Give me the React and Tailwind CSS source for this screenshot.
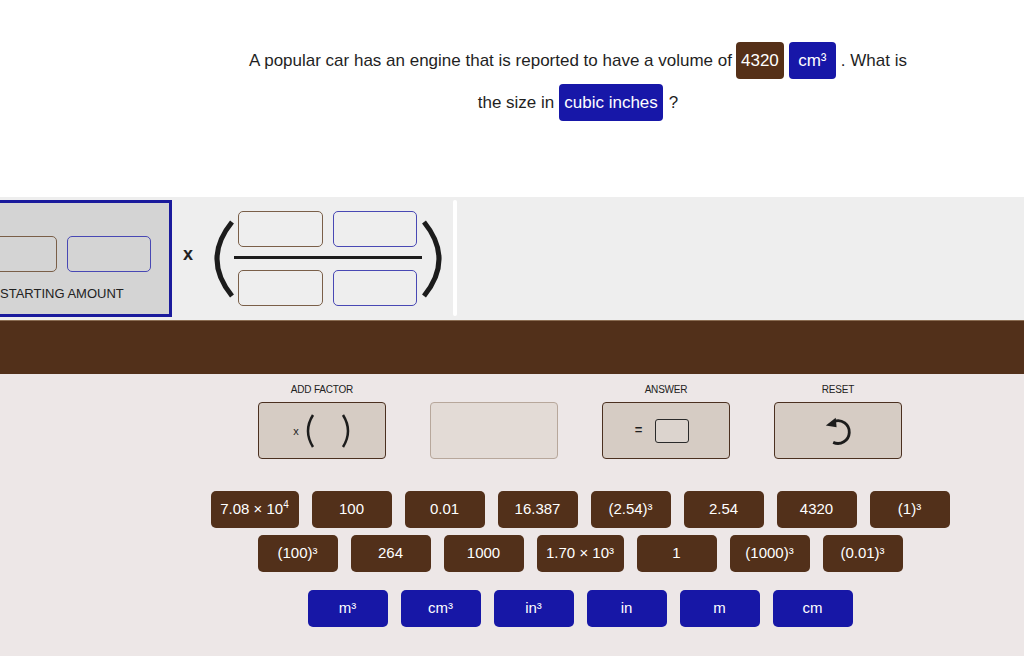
import React from "react";

const row1 = [
  { text: "7.08 × 10", sup: "4", w: "w-[88px]" },
  { text: "100" },
  { text: "0.01" },
  { text: "16.387" },
  { text: "(2.54)³" },
  { text: "2.54" },
  { text: "4320" },
  { text: "(1)³" },
];

const row2 = [
  { text: "(100)³" },
  { text: "264" },
  { text: "1000" },
  { text: "1.70 × 10³", w: "w-[87px]" },
  { text: "1" },
  { text: "(1000)³" },
  { text: "(0.01)³" },
];

const units = ["m³", "cm³", "in³", "in", "m", "cm"];

function Chip({ item }) {
  return (
    <button
      className={`${item.w || "w-[80px]"} h-[37px] rounded-[5px] bg-[#52301a] text-white text-[15px] flex items-center justify-center`}
    >
      {item.text}
      {item.sup && (
        <sup className="text-[10px]">{item.sup}</sup>
      )}
    </button>
  );
}

function UnitChip({ label }) {
  return (
    <button className="w-[80px] h-[37px] rounded-[5px] bg-[#1717a6] text-white text-[15px] flex items-center justify-center">
      {label}
    </button>
  );
}

function BigParen({ right }) {
  return (
    <svg width="24" height="80" viewBox="0 0 24 80" className="shrink-0">
      <path
        d={right ? "M6 3 Q36 40 6 77" : "M18 3 Q-12 40 18 77"}
        fill="none"
        stroke="#1c1c1c"
        strokeWidth="5"
      />
    </svg>
  );
}

function SmallParen({ right }) {
  return (
    <svg width="10" height="34" viewBox="0 0 10 34">
      <path
        d={right ? "M2 1 Q12 17 2 33" : "M8 1 Q-2 17 8 33"}
        fill="none"
        stroke="#1c1c1c"
        strokeWidth="2.5"
      />
    </svg>
  );
}

function Slot({ brown }) {
  return (
    <div
      className={`h-[36px] rounded-[5px] border ${
        brown ? "w-[85px] border-[#7a5f48]" : "w-[84px] border-[#4848b4]"
      }`}
    />
  );
}

export default function App() {
  return (
    <div className="w-[1024px] h-[656px] overflow-hidden flex flex-col bg-white font-['Liberation_Sans',Arial,sans-serif] text-[#1f1f1f]">

      {/* question */}
      <div className="h-[197px] shrink-0 pl-[132px] pt-[42px] flex flex-col items-center text-[17px]">
        <div className="flex items-center h-[37px]">
          <span>A popular car has an engine that is reported to have a volume of</span>
          <span className="ml-[4px] h-[37px] px-[5px] rounded-[4px] bg-[#553018] text-white flex items-center">
            4320
          </span>
          <span className="ml-[5px] h-[37px] w-[47px] rounded-[4px] bg-[#1717a8] text-white flex items-center justify-center">
            cm³
          </span>
          <span className="ml-[5px]">. What is</span>
        </div>
        <div className="flex items-center h-[37px] mt-[5px]">
          <span>the size in</span>
          <span className="ml-[5px] h-[37px] px-[5px] rounded-[4px] bg-[#1717a8] text-white flex items-center">
            cubic inches
          </span>
          <span className="ml-[6px]">?</span>
        </div>
      </div>

      {/* work area */}
      <div className="h-[123px] shrink-0 bg-[#eeeeee] flex items-start pt-[3px]">
        <div className="ml-[-60px] w-[232px] h-[117px] shrink-0 border-[3px] border-[#1a1a9c] bg-[#d4d4d4] flex flex-col">
          <div className="flex gap-[10px] pl-[29px] mt-[33px]">
            <Slot brown />
            <Slot />
          </div>
          <div className="ml-[57px] mt-[14px] text-[13px] leading-[16px] text-[#222]">
            STARTING AMOUNT
          </div>
        </div>

        <div className="self-stretch flex items-center pb-[3px]">
          <span className="w-[32px] text-center text-[18px] font-bold text-[#222] mt-[-8px]">x</span>
          <div className="ml-[10px] flex items-center">
            <BigParen />
            <div className="-mx-[4px] w-[188px] flex flex-col">
              <div className="flex gap-[10px] px-[4px]">
                <Slot brown />
                <Slot />
              </div>
              <div className="mt-[9px] h-[3px] bg-[#1c1c1c]" />
              <div className="flex gap-[10px] px-[4px] mt-[11px]">
                <Slot brown />
                <Slot />
              </div>
            </div>
            <BigParen right />
          </div>
        </div>

        <div className="ml-[11px] w-[4px] h-[116px] rounded-full bg-white" />
      </div>

      <div className="h-[54px] shrink-0 bg-[#52301a] border-t border-[#8a6c52]" />

      {/* controls */}
      <div className="flex-1 bg-[#ede7e7] pl-[136px] flex flex-col items-center">
        <div className="pt-[9px] grid grid-cols-4 gap-x-[44px]">
          {["ADD FACTOR", "", "ANSWER", "RESET"].map((l, i) => (
            <div key={i} className="w-[128px] h-[14px] leading-[14px] text-center text-[10px] text-[#222] tracking-[-0.2px]">
              {l}
            </div>
          ))}
          <button className="mt-[5px] h-[57px] rounded-[4px] border border-[#4b3020] bg-[#d6ccc4] flex items-center justify-center">
            <span className="text-[11px] mr-[6px] mt-[1px]">x</span>
            <SmallParen />
            <span className="w-[26px]" />
            <SmallParen right />
          </button>
          <button className="mt-[5px] h-[57px] rounded-[4px] border border-[#b7a79b] bg-[#e3dbd6]" />
          <button className="mt-[5px] h-[57px] rounded-[4px] border border-[#4b3020] bg-[#d6ccc4] flex items-center justify-center">
            <span className="text-[13px] font-bold mr-[13px] mt-[-2px]">=</span>
            <span className="mr-[8px] w-[34px] h-[24px] rounded-[3px] border-[1.5px] border-[#2a2a2a] bg-[#dcd4ce]" />
          </button>
          <button className="mt-[5px] h-[57px] rounded-[4px] border border-[#4b3020] bg-[#d6ccc4] flex items-center justify-center">
            <svg width="34" height="34" viewBox="0 0 24 24" className="mt-[3px]">
              <path d="M9.3 4.5 A8 8 0 1 1 8.6 19.3" fill="none" stroke="#1c1c1c" strokeWidth="2" />
              <polygon points="3.4,7.4 10.4,2 11,8.6" fill="#1c1c1c" />
            </svg>
          </button>
        </div>

        <div className="mt-[32px] flex gap-[13px]">
          {row1.map((it, i) => (
            <Chip key={i} item={it} />
          ))}
        </div>
        <div className="mt-[7px] flex gap-[13px]">
          {row2.map((it, i) => (
            <Chip key={i} item={it} />
          ))}
        </div>
        <div className="mt-[18px] flex gap-[13px]">
          {units.map((u) => (
            <UnitChip key={u} label={u} />
          ))}
        </div>
      </div>
    </div>
  );
}
